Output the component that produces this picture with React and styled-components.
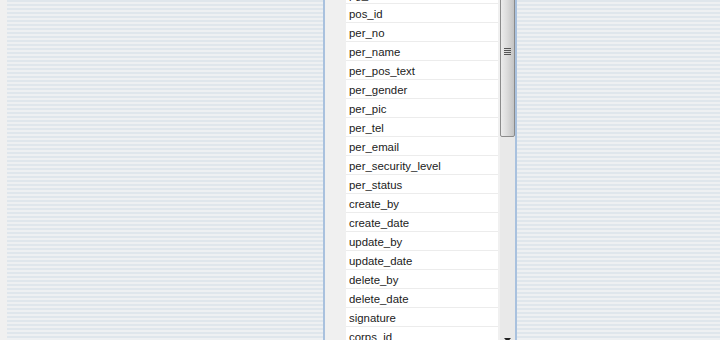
import styled, { createGlobalStyle } from 'styled-components';

const fields = [
  'pg_id',
  'pos_id',
  'per_no',
  'per_name',
  'per_pos_text',
  'per_gender',
  'per_pic',
  'per_tel',
  'per_email',
  'per_security_level',
  'per_status',
  'create_by',
  'create_date',
  'update_by',
  'update_date',
  'delete_by',
  'delete_date',
  'signature',
  'corps_id',
];

const GlobalStyle = createGlobalStyle`
  html, body {
    margin: 0;
    padding: 0;
    overflow: hidden;
    background: #f0f0f0;
  }
`;

const App = () => {
  return (
    <>
      <GlobalStyle />
      <Page>
        <Gutter />
        <Stripes $width="316px" />
        <Panel>
          <Margin />
          <List>
            <Scrolled>
              {fields.map((f) => (
                <Row key={f}>{f}</Row>
              ))}
            </Scrolled>
          </List>
          <Gap />
          <ScrollBar>
            <Thumb>
              <Grip>
                <span />
                <span />
                <span />
                <span />
              </Grip>
            </Thumb>
            <Track />
            <ArrowButton>
              <svg width="7" height="4" viewBox="0 0 7 4">
                <path d="M0 0h7L3.5 4z" fill="#222" />
              </svg>
            </ArrowButton>
          </ScrollBar>
        </Panel>
        <Stripes />
      </Page>
    </>
  );
};

const Page = styled.div`
  display: flex;
  width: 720px;
  height: 348px;
  font-family: "Liberation Sans", Arial, sans-serif;
`;

const Gutter = styled.div`
  width: 7px;
  background: #f0f0f0;
`;

const Stripes = styled.div`
  flex: ${(p) => (p.$width ? `0 0 ${p.$width}` : '1')};
  background: repeating-linear-gradient(
    to bottom,
    #dfe6ec 0px,
    #dfe6ec 2px,
    #eef0f2 2px,
    #eef0f2 4px
  );
`;

const Panel = styled.div`
  width: 190px;
  display: flex;
  background: #f0f0f0;
  border-left: 2px solid #a9c1de;
  border-right: 2px solid #a9c1de;
`;

const Margin = styled.div`
  width: 21px;
`;

const List = styled.div`
  width: 152px;
  background: #fff;
  overflow: hidden;
`;

const Scrolled = styled.div`
  margin-top: -15px;
`;

const Row = styled.div`
  height: 18px;
  line-height: 20px;
  border-bottom: 1px solid #ececec;
  padding-left: 3px;
  font-size: 11.4px;
  color: #1b1b1b;
  white-space: nowrap;
`;

const Gap = styled.div`
  width: 2px;
`;

const ScrollBar = styled.div`
  width: 15px;
  display: flex;
  flex-direction: column;
  background: #e9e9e9;
`;

const Thumb = styled.div`
  margin-top: -35px;
  height: 170px;
  border: 1px solid #8b8b8b;
  border-radius: 2px;
  background: linear-gradient(to right, #ececec 0%, #dcdcdc 45%, #c4c4c4 100%);
  display: flex;
  align-items: center;
  justify-content: center;
`;

const Grip = styled.div`
  display: flex;
  flex-direction: column;
  gap: 1px;
  span {
    display: block;
    width: 7px;
    height: 1px;
    background: #555;
  }
`;

const Track = styled.div`
  flex: 1;
`;

const ArrowButton = styled.div`
  height: 17px;
  display: flex;
  align-items: center;
  justify-content: center;
`;

export default App;
